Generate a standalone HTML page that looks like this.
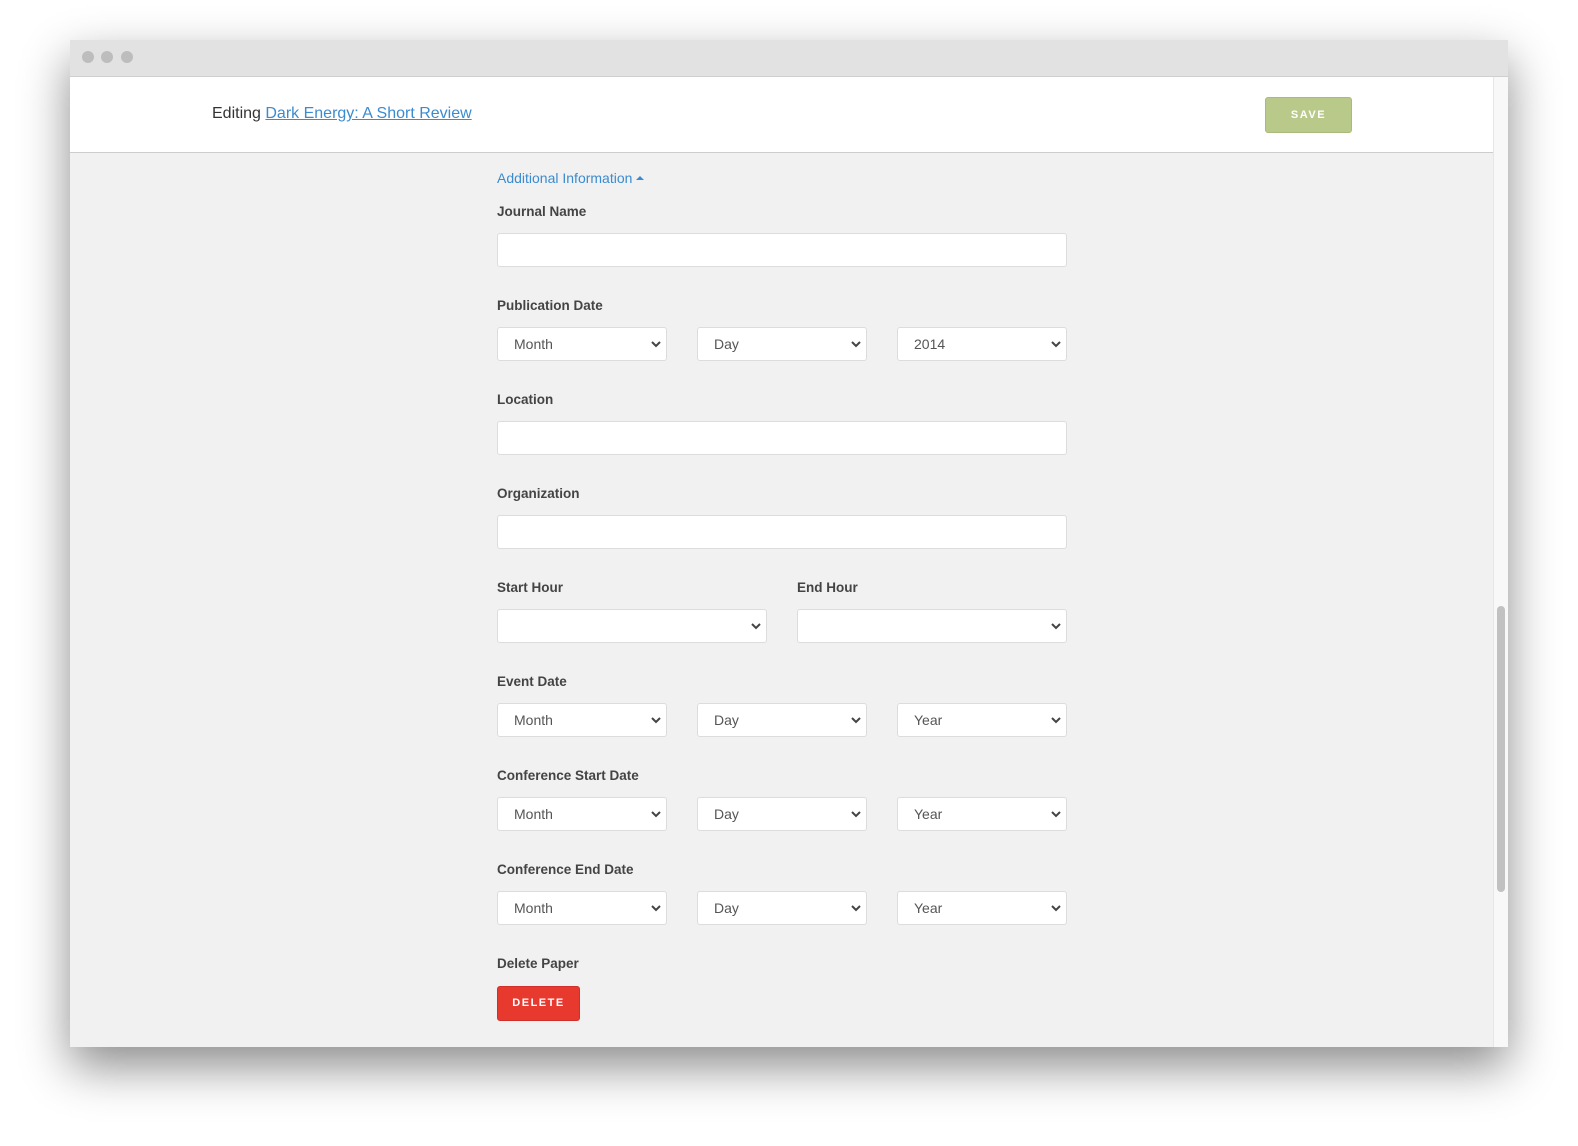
<!DOCTYPE html>
<html><head><meta charset="utf-8"><style>
*{box-sizing:border-box;margin:0;padding:0}
body{width:1578px;height:1146px;background:#fff;position:relative;overflow:hidden;font-family:"Liberation Sans",sans-serif}
.win{position:absolute;left:70px;top:40px;width:1438px;height:1007px;background:#f1f1f1;box-shadow:0 20px 45px rgba(0,0,0,0.45);overflow:hidden}
.tb{position:absolute;left:0;top:0;right:0;height:37px;background:#e2e2e2;border-bottom:1px solid #cfcfcf}
.dot{position:absolute;top:11px;width:12px;height:12px;border-radius:50%;background:#bdbdbd}
.hdr{position:absolute;left:0;top:37px;width:1423px;height:76px;background:#fff;border-bottom:1px solid #cdcdcd}
.track{position:absolute;left:1423px;top:37px;width:15px;bottom:0;background:#f8f8f8;border-left:1px solid #e6e6e6}
.thumb{position:absolute;left:1427px;top:566px;width:8px;height:286px;border-radius:4px;background:#c1c1c1}
.ed{position:absolute;left:142px;top:65px;font-size:16px;color:#333}
.ed a{color:#3a8bd0;text-decoration:underline}
.save{position:absolute;left:1195px;top:57px;width:87px;height:36px;background:#b8c98a;border:1px solid #a9bb7c;border-radius:3px;color:#fff;font-weight:bold;font-size:11px;letter-spacing:1.5px;text-align:center;line-height:34px}
.add{position:absolute;left:427px;top:130px;font-size:14px;color:#3a8bd0}
.tri{display:inline-block;width:0;height:0;border-left:4px solid transparent;border-right:4px solid transparent;border-bottom:4px solid #3a8bd0;vertical-align:middle;margin-left:4px;margin-top:-3px}
.lbl{position:absolute;font-size:13.5px;font-weight:bold;color:#444}
.inp{position:absolute;height:34px;background:#fff;border:1px solid #dcdcdc;border-radius:3px;font-size:14px;color:#555;line-height:32px;padding-left:16px}
.inp svg{position:absolute;right:5px;top:12px}
.del{position:absolute;left:427px;top:946px;width:83px;height:35px;background:#e8392f;border:1px solid #d0302a;border-radius:3px;color:#fff;font-weight:bold;font-size:11px;letter-spacing:1.5px;text-align:center;line-height:33px}
</style></head><body>
<div class="win">
<div class="tb"><div class="dot" style="left:12px"></div><div class="dot" style="left:31px"></div><div class="dot" style="left:51px"></div></div>
<div class="hdr"></div>
<div class="ed">Editing <a>Dark Energy: A Short Review</a></div>
<div class="save">SAVE</div>
<div class="track"></div><div class="thumb"></div>
<div class="add">Additional Information<span class="tri"></span></div>

<div class="lbl" style="left:427px;top:164px">Journal Name</div>
<div class="inp" style="left:427px;top:193px;width:570px"></div>

<div class="lbl" style="left:427px;top:258px">Publication Date</div>
<div class="inp" style="left:427px;top:287px;width:170px">Month<svg width="10" height="8"><path d="M1 2l4 4 4-4" stroke="#444" stroke-width="2" fill="none"/></svg></div>
<div class="inp" style="left:627px;top:287px;width:170px">Day<svg width="10" height="8"><path d="M1 2l4 4 4-4" stroke="#444" stroke-width="2" fill="none"/></svg></div>
<div class="inp" style="left:827px;top:287px;width:170px">2014<svg width="10" height="8"><path d="M1 2l4 4 4-4" stroke="#444" stroke-width="2" fill="none"/></svg></div>

<div class="lbl" style="left:427px;top:352px">Location</div>
<div class="inp" style="left:427px;top:381px;width:570px"></div>

<div class="lbl" style="left:427px;top:446px">Organization</div>
<div class="inp" style="left:427px;top:475px;width:570px"></div>

<div class="lbl" style="left:427px;top:540px">Start Hour</div>
<div class="lbl" style="left:727px;top:540px">End Hour</div>
<div class="inp" style="left:427px;top:569px;width:270px"><svg width="10" height="8"><path d="M1 2l4 4 4-4" stroke="#444" stroke-width="2" fill="none"/></svg></div>
<div class="inp" style="left:727px;top:569px;width:270px"><svg width="10" height="8"><path d="M1 2l4 4 4-4" stroke="#444" stroke-width="2" fill="none"/></svg></div>

<div class="lbl" style="left:427px;top:634px">Event Date</div>
<div class="inp" style="left:427px;top:663px;width:170px">Month<svg width="10" height="8"><path d="M1 2l4 4 4-4" stroke="#444" stroke-width="2" fill="none"/></svg></div>
<div class="inp" style="left:627px;top:663px;width:170px">Day<svg width="10" height="8"><path d="M1 2l4 4 4-4" stroke="#444" stroke-width="2" fill="none"/></svg></div>
<div class="inp" style="left:827px;top:663px;width:170px">Year<svg width="10" height="8"><path d="M1 2l4 4 4-4" stroke="#444" stroke-width="2" fill="none"/></svg></div>

<div class="lbl" style="left:427px;top:728px">Conference Start Date</div>
<div class="inp" style="left:427px;top:757px;width:170px">Month<svg width="10" height="8"><path d="M1 2l4 4 4-4" stroke="#444" stroke-width="2" fill="none"/></svg></div>
<div class="inp" style="left:627px;top:757px;width:170px">Day<svg width="10" height="8"><path d="M1 2l4 4 4-4" stroke="#444" stroke-width="2" fill="none"/></svg></div>
<div class="inp" style="left:827px;top:757px;width:170px">Year<svg width="10" height="8"><path d="M1 2l4 4 4-4" stroke="#444" stroke-width="2" fill="none"/></svg></div>

<div class="lbl" style="left:427px;top:822px">Conference End Date</div>
<div class="inp" style="left:427px;top:851px;width:170px">Month<svg width="10" height="8"><path d="M1 2l4 4 4-4" stroke="#444" stroke-width="2" fill="none"/></svg></div>
<div class="inp" style="left:627px;top:851px;width:170px">Day<svg width="10" height="8"><path d="M1 2l4 4 4-4" stroke="#444" stroke-width="2" fill="none"/></svg></div>
<div class="inp" style="left:827px;top:851px;width:170px">Year<svg width="10" height="8"><path d="M1 2l4 4 4-4" stroke="#444" stroke-width="2" fill="none"/></svg></div>

<div class="lbl" style="left:427px;top:916px">Delete Paper</div>
<div class="del">DELETE</div>
</div>
</body></html>
